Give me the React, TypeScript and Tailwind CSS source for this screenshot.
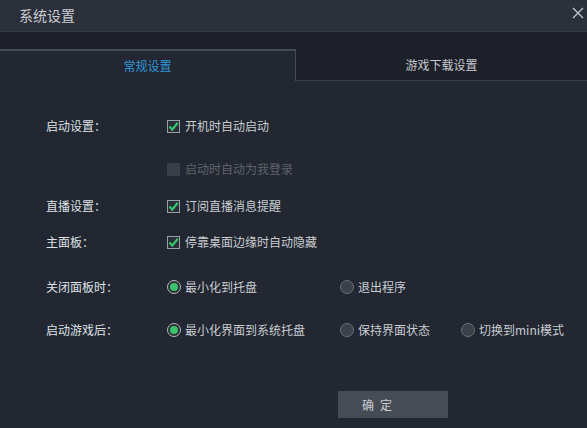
import React from 'react';

const font = { fontFamily: '"Microsoft YaHei", "Noto Sans CJK SC", sans-serif' };

const CheckBox = ({ checked, disabled }: { checked?: boolean; disabled?: boolean }) => (
  <span
    className={`w-[13px] h-[13px] shrink-0 flex items-center justify-center border ${
      disabled ? 'border-[#3a3f47] bg-[#3a3f47]' : 'border-[#9aa0a8] bg-[#2a2f37]'
    }`}
  >
    {checked && (
      <svg width="11" height="11" viewBox="0 0 11 11">
        <path d="M1.5 5.5 L4.3 8.5 L9.8 1.8" fill="none" stroke="#35c46a" strokeWidth="2.2" />
      </svg>
    )}
  </span>
);

const Radio = ({ checked }: { checked?: boolean }) => (
  <span
    className={`w-[14px] h-[14px] shrink-0 rounded-full flex items-center justify-center border ${
      checked ? 'border-[#b5bac0] bg-[#2a2f37]' : 'border-[#6a6f77] bg-[#3b4049]'
    }`}
  >
    {checked && <span className="w-[8px] h-[8px] rounded-full bg-[#3cc26a]" />}
  </span>
);

const Row = ({ label, children }: { label?: string; children: React.ReactNode }) => (
  <div className="flex items-center h-[28px]">
    <div className="w-[167px] shrink-0 pl-[46px] text-[12px] text-[#dfe2e6]">{label}</div>
    <div className="flex items-center">{children}</div>
  </div>
);

export default function App() {
  return (
    <div className="w-[587px] h-[428px] bg-[#222731] flex flex-col overflow-hidden" style={font}>
      <div className="h-[32px] bg-[#2b303a] flex items-center justify-between pl-[19px] pr-[2px] border-b border-[#363b44]">
        <span className="text-[14px] text-[#c9ccd1]">系统设置</span>
        <svg width="14" height="14" viewBox="0 0 14 14" className="mb-[6px]">
          <path d="M2 2 L12 12 M12 2 L2 12" stroke="#c8ccd2" strokeWidth="1.2" />
        </svg>
      </div>
      <div className="h-[17px] bg-[#1d2028]" />
      <div className="flex h-[32px]">
        <div className="w-[296px] border-t-2 border-r border-[#464b53] bg-[#222731] flex items-center justify-center text-[12px] text-[#2f96d8]">
          常规设置
        </div>
        <div className="flex-1 bg-[#1d2028] border-b border-[#3a3f47] flex items-center justify-center text-[12px] text-[#c6c9ce]">
          游戏下载设置
        </div>
      </div>
      <div className="flex flex-col pt-[31px]">
        <Row label="启动设置：">
          <CheckBox checked />
          <span className="ml-[5px] text-[12px] text-[#c9cdd2]">开机时自动启动</span>
        </Row>
        <div className="h-[15px]" />
        <Row>
          <CheckBox disabled />
          <span className="ml-[5px] text-[12px] text-[#5f646c]">启动时自动为我登录</span>
        </Row>
        <div className="h-[9px]" />
        <Row label="直播设置：">
          <CheckBox checked />
          <span className="ml-[5px] text-[12px] text-[#c9cdd2]">订阅直播消息提醒</span>
        </Row>
        <div className="h-[8px]" />
        <Row label="主面板：">
          <CheckBox checked />
          <span className="ml-[5px] text-[12px] text-[#c9cdd2]">停靠桌面边缘时自动隐藏</span>
        </Row>
        <div className="h-[17px]" />
        <Row label="关闭面板时：">
          <div className="flex items-center w-[173px]">
            <Radio checked />
            <span className="ml-[4px] text-[12px] text-[#c9cdd2]">最小化到托盘</span>
          </div>
          <div className="flex items-center">
            <Radio />
            <span className="ml-[4px] text-[12px] text-[#c9cdd2]">退出程序</span>
          </div>
        </Row>
        <div className="h-[15px]" />
        <Row label="启动游戏后：">
          <div className="flex items-center w-[173px]">
            <Radio checked />
            <span className="ml-[4px] text-[12px] text-[#c9cdd2]">最小化界面到系统托盘</span>
          </div>
          <div className="flex items-center w-[121px]">
            <Radio />
            <span className="ml-[4px] text-[12px] text-[#c9cdd2]">保持界面状态</span>
          </div>
          <div className="flex items-center">
            <Radio />
            <span className="ml-[4px] text-[12px] text-[#c9cdd2]">切换到mini模式</span>
          </div>
        </Row>
        <div className="flex pl-[338px] pt-[47px]">
          <div className="w-[110px] h-[27px] bg-[#464c55] flex items-center pl-[24px] text-[12px] text-[#c9ccd0] tracking-[6px]">
            确定
          </div>
        </div>
      </div>
    </div>
  );
}
